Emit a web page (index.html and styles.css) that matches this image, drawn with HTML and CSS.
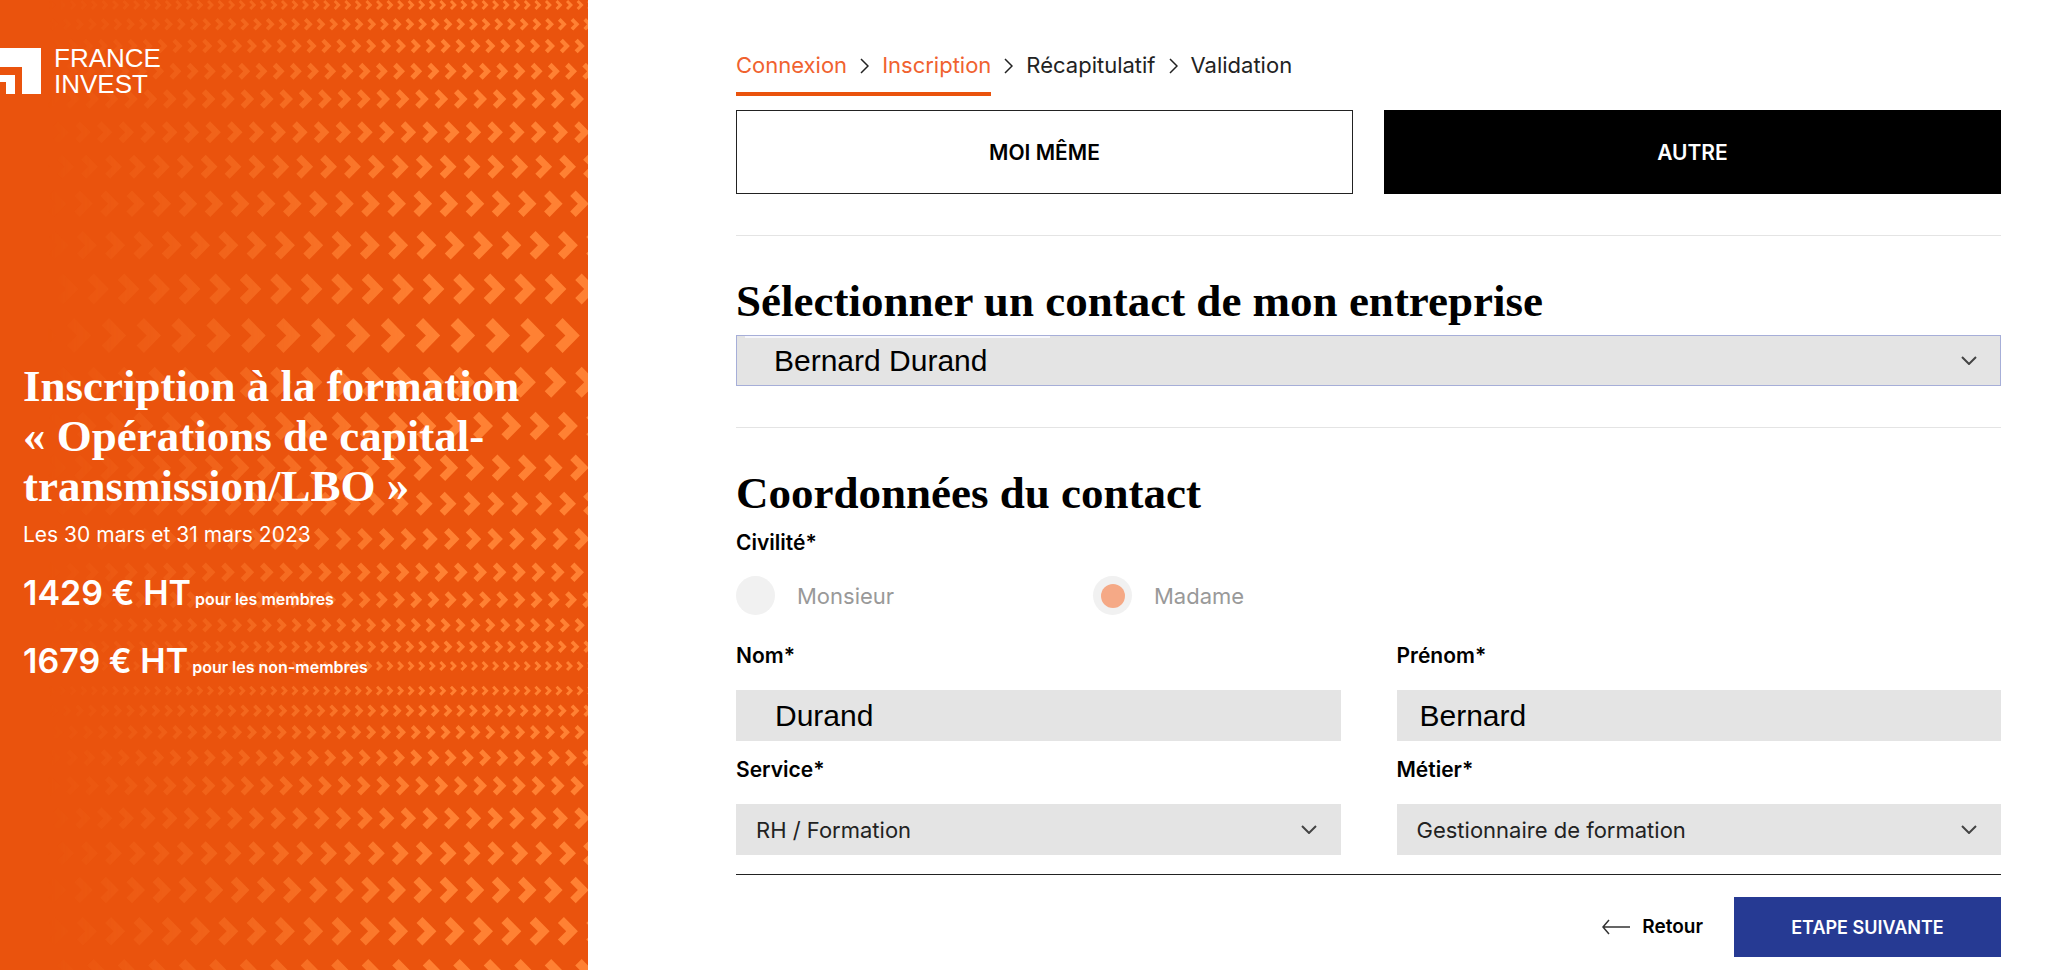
FILE: index.html
```html
<!DOCTYPE html>
<html lang="fr">
  <head>
    <meta charset="UTF-8" />
    <meta name="viewport" content="width=device-width, initial-scale=1.0" />
    <title>France Invest - Inscription</title>
    <link rel="stylesheet" href="styles.css">
  </head>
  <body>
    <div class="page">
      <aside class="side">
        <svg id="pattern" class="pattern" aria-hidden="true"></svg>
        <div class="side-content">
          <a class="logo" href="#">
            <svg class="logo-mark" width="41" height="46" viewBox="0 0 41 46" aria-hidden="true">
              <path d="M0 0H41V46H22V19H0Z M0 27H15V46H6V34H0Z" fill="#fff" />
            </svg>
            <span class="logo-text">FRANCE<br>INVEST</span>
          </a>
          <div class="course">
            <h1>Inscription à la formation «&nbsp;Opérations de capital-transmission/LBO&nbsp;»</h1>
            <p class="date">Les 30 mars et 31 mars 2023</p>
            <p class="price">1429 € HT<small> pour les membres</small></p>
            <p class="price">1679 € HT<small> pour les non-membres</small></p>
          </div>
        </div>
      </aside>

      <main class="main">
        <nav class="steps">
          <div class="steps-done">
            <a href="#">Connexion</a>
            <svg class="sep" viewBox="0 0 9 16"><path d="M1 1L8 8L1 15" /></svg>
            <a href="#">Inscription</a>
          </div>
          <svg class="sep" viewBox="0 0 9 16"><path d="M1 1L8 8L1 15" /></svg>
          <a href="#">Récapitulatif</a>
          <svg class="sep" viewBox="0 0 9 16"><path d="M1 1L8 8L1 15" /></svg>
          <a href="#">Validation</a>
        </nav>

        <form>
          <div class="tabs">
            <button type="button" class="tab">MOI MÊME</button>
            <button type="button" class="tab active">AUTRE</button>
          </div>

          <section class="block">
            <h2><label for="contact">Sélectionner un contact de mon entreprise</label></h2>
            <div class="select">
              <select id="contact" class="field contact">
                <option>Bernard Durand</option>
              </select>
              <svg class="caret" viewBox="0 0 16 9"><path d="M1 1L8 8L15 1" /></svg>
            </div>
          </section>

          <section class="block">
            <h2>Coordonnées du contact</h2>
            <fieldset class="civility" disabled>
              <legend>Civilité*</legend>
              <div class="radios">
                <label class="radio"><input type="radio" name="civilite"> Monsieur</label>
                <label class="radio"><input type="radio" name="civilite" checked> Madame</label>
              </div>
            </fieldset>
            <div class="fields">
              <div class="group">
                <label for="nom">Nom*</label>
                <input id="nom" class="field name" type="text" value="Durand">
              </div>
              <div class="group">
                <label for="prenom">Prénom*</label>
                <input id="prenom" class="field firstname" type="text" value="Bernard">
              </div>
              <div class="group">
                <label for="service">Service*</label>
                <div class="select">
                  <select id="service" class="field">
                    <option>RH / Formation</option>
                  </select>
                  <svg class="caret" viewBox="0 0 16 9"><path d="M1 1L8 8L15 1" /></svg>
                </div>
              </div>
              <div class="group">
                <label for="metier">Métier*</label>
                <div class="select">
                  <select id="metier" class="field">
                    <option>Gestionnaire de formation</option>
                  </select>
                  <svg class="caret" viewBox="0 0 16 9"><path d="M1 1L8 8L15 1" /></svg>
                </div>
              </div>
            </div>
          </section>

          <div class="actions">
            <a class="back" href="#">
              <svg width="28" height="16" viewBox="0 0 28 16"><path d="M7 1L1 8L7 15M1 8H28" /></svg>
              Retour
            </a>
            <button type="submit" class="next">ETAPE SUIVANTE</button>
          </div>
        </form>
      </main>
    </div>

    <script>
      // chevron sizes: height, spacing, x of the last tip
      const sizes = [
        [10, 10.56, 583.6],
        [12.5, 12.7, 579.4],
        [14.5, 14.9, 584.8],
        [17, 17.2, 577],
        [19.5, 19.4, 584],
        [22, 21.7, 568],
        [24, 23.9, 576],
        [26.5, 26.1, 562.6],
        [28.5, 28.3, 577.9],
        [31, 30.5, 566.4],
        [35, 34.9, 579.8],
      ];

      // rows: y of the centre, index in sizes
      const rows = [
        [5, 0], [24.3, 1], [46, 2], [71.3, 3], [99, 4], [132.3, 5], [166.7, 6],
        [203.7, 7], [245.3, 8], [289, 9], [335.5, 10], [382.3, 9], [426, 8],
        [467.7, 7], [503.7, 6], [539, 5], [572.3, 4], [599.7, 3], [625.3, 2],
        [646.7, 1], [666, 0], [690.7, 0], [710.7, 1], [732.3, 2], [757.7, 3],
        [785.7, 4], [818.3, 5], [853.3, 6], [890, 7], [931.3, 8], [974.5, 9],
      ];

      const shape = [[0, 0.21], [0.21, 0], [0.7, 0.5], [0.21, 1], [0, 0.79], [0.29, 0.5]];
      let d = "";
      rows.forEach(([y, index]) => {
        const [h, step, last] = sizes[index];
        for (let tip = last + step; tip > 30; tip -= step) {
          const points = shape.map(([px, py]) =>
            (tip + (px - 0.7) * h).toFixed(1) + " " + (y + (py - 0.5) * h).toFixed(1)
          );
          d += "M" + points.join("L") + "Z";
        }
      });
      document.getElementById("pattern").innerHTML = `<path d="${d}" fill="#ff8133" />`;
    </script>
  </body>
</html>
```
FILE: styles.css
```css
:root {
  --orange: #ea530d;
  --blue: #263a93;
  --grey: #e4e4e4;
  --text: #222222;
}
* {
  box-sizing: border-box;
}
body {
  margin: 0;
  font-family: Inter, sans-serif;
  font-size: 22px;
  line-height: 28px;
  color: var(--text);
  background: #fff;
}
a {
  color: inherit;
  text-decoration: none;
}
h1,
h2 {
  margin: 0;
  font-family: "Liberation Serif", serif;
  font-size: 45px;
  line-height: 50px;
  font-weight: bold;
}
.page {
  display: grid;
  grid-template-columns: 588fr 1460fr;
  min-height: 100vh;
}

/* left panel */
.side {
  display: grid;
  background: var(--orange);
  color: #fff;
  overflow: hidden;
}
.pattern {
  grid-area: 1 / 1;
  width: 100%;
  height: 100%;
  -webkit-mask-image: linear-gradient(to right, transparent 8%, rgba(0, 0, 0, 0.4) 40%, #000 74%);
  mask-image: linear-gradient(to right, transparent 8%, rgba(0, 0, 0, 0.4) 40%, #000 74%);
}
.side-content {
  grid-area: 1 / 1;
  position: relative;
  padding-top: 48px;
}
.logo {
  display: flex;
  align-items: center;
  gap: 13px;
  height: 46px;
}
.logo-text {
  font-family: "Liberation Sans", sans-serif;
  font-size: 26px;
  line-height: 26px;
}
.course {
  padding: 267px 24px 0 23px;
}
.date {
  margin: 10px 0 20px;
  font-size: 21px;
}
.price {
  margin: 0 0 20px;
  font-size: 34px;
  line-height: 48px;
  font-weight: 600;
}
.price small {
  font-size: 16px;
  line-height: 16px;
}

/* form */
.main {
  padding: 51px 47px 12px 148px;
}
.steps {
  display: flex;
  align-items: flex-start;
  gap: 13px;
}
.steps-done {
  display: flex;
  gap: 13px;
  height: 45px;
  color: #f0622f;
  border-bottom: 4px solid var(--orange);
}
.sep {
  width: 9px;
  height: 16px;
  margin-top: 7px;
  fill: none;
  stroke: var(--text);
  stroke-width: 1.5;
}
.tabs {
  display: grid;
  grid-template-columns: 1fr 1fr;
  gap: 31px;
  margin-top: 14px;
}
.tab {
  height: 84px;
  border: 1px solid #222;
  background: #fff;
  color: #000;
  font: 600 21px Inter, sans-serif;
  cursor: pointer;
}
.tab.active {
  background: #000;
  border-color: #000;
  color: #fff;
}
.block {
  margin-top: 41px;
  padding-top: 40px;
  border-top: 1px solid var(--grey);
}
h2 {
  color: #000;
}
h2 + .select {
  margin-top: 9px;
}
.select {
  display: grid;
  align-items: center;
}
.select > * {
  grid-area: 1 / 1;
}
.field {
  width: 100%;
  height: 51px;
  padding: 0 20px;
  border: 0;
  border-radius: 0;
  background: var(--grey);
  color: var(--text);
  font: 22px Inter, sans-serif;
  appearance: none;
}
.contact,
.name,
.firstname {
  font: 30px "Liberation Sans", sans-serif;
  color: #000;
}
.contact {
  padding: 0 37px;
  border: 1px solid #a6aed8;
  background: linear-gradient(#f6f6fa, #f6f6fa) 8px 0 / 305px 2px no-repeat var(--grey);
}
.name {
  padding: 0 39px;
}
.firstname {
  padding: 0 23px;
}
.caret {
  justify-self: end;
  width: 16px;
  height: 9px;
  margin-right: 24px;
  fill: none;
  stroke: #444;
  stroke-width: 2;
  pointer-events: none;
}
.civility {
  margin: 11px 0 0;
  padding: 0;
  border: 0;
}
legend,
.group > label {
  padding: 0;
  font-weight: 600;
  font-size: 21px;
  color: #000;
}
.radios {
  display: flex;
  margin-top: 19px;
}
.radio {
  display: flex;
  align-items: center;
  gap: 22px;
  width: 357px;
  color: #999;
}
.radio input {
  display: grid;
  place-items: center;
  width: 39px;
  height: 39px;
  margin: 0;
  border-radius: 50%;
  background: #f1f1f1;
  appearance: none;
}
.radio input:checked::before {
  content: "";
  width: 24px;
  height: 24px;
  border-radius: 50%;
  background: #f5a986;
}
.fields {
  display: grid;
  grid-template-columns: 1fr 1fr;
  gap: 15px 56px;
  margin-top: 27px;
}
.group {
  display: grid;
  gap: 20px;
}
.actions {
  display: flex;
  justify-content: flex-end;
  align-items: center;
  gap: 31px;
  margin-top: 19px;
  padding-top: 22px;
  border-top: 1px solid #222;
}
.back {
  display: flex;
  align-items: center;
  gap: 12px;
  font-size: 19px;
  font-weight: 600;
  color: #000;
}
.back svg {
  fill: none;
  stroke: #333;
  stroke-width: 1.5;
}
.next {
  width: 267px;
  height: 60px;
  border: 0;
  background: var(--blue);
  color: #fff;
  font: 600 18px Inter, sans-serif;
  cursor: pointer;
}
```
